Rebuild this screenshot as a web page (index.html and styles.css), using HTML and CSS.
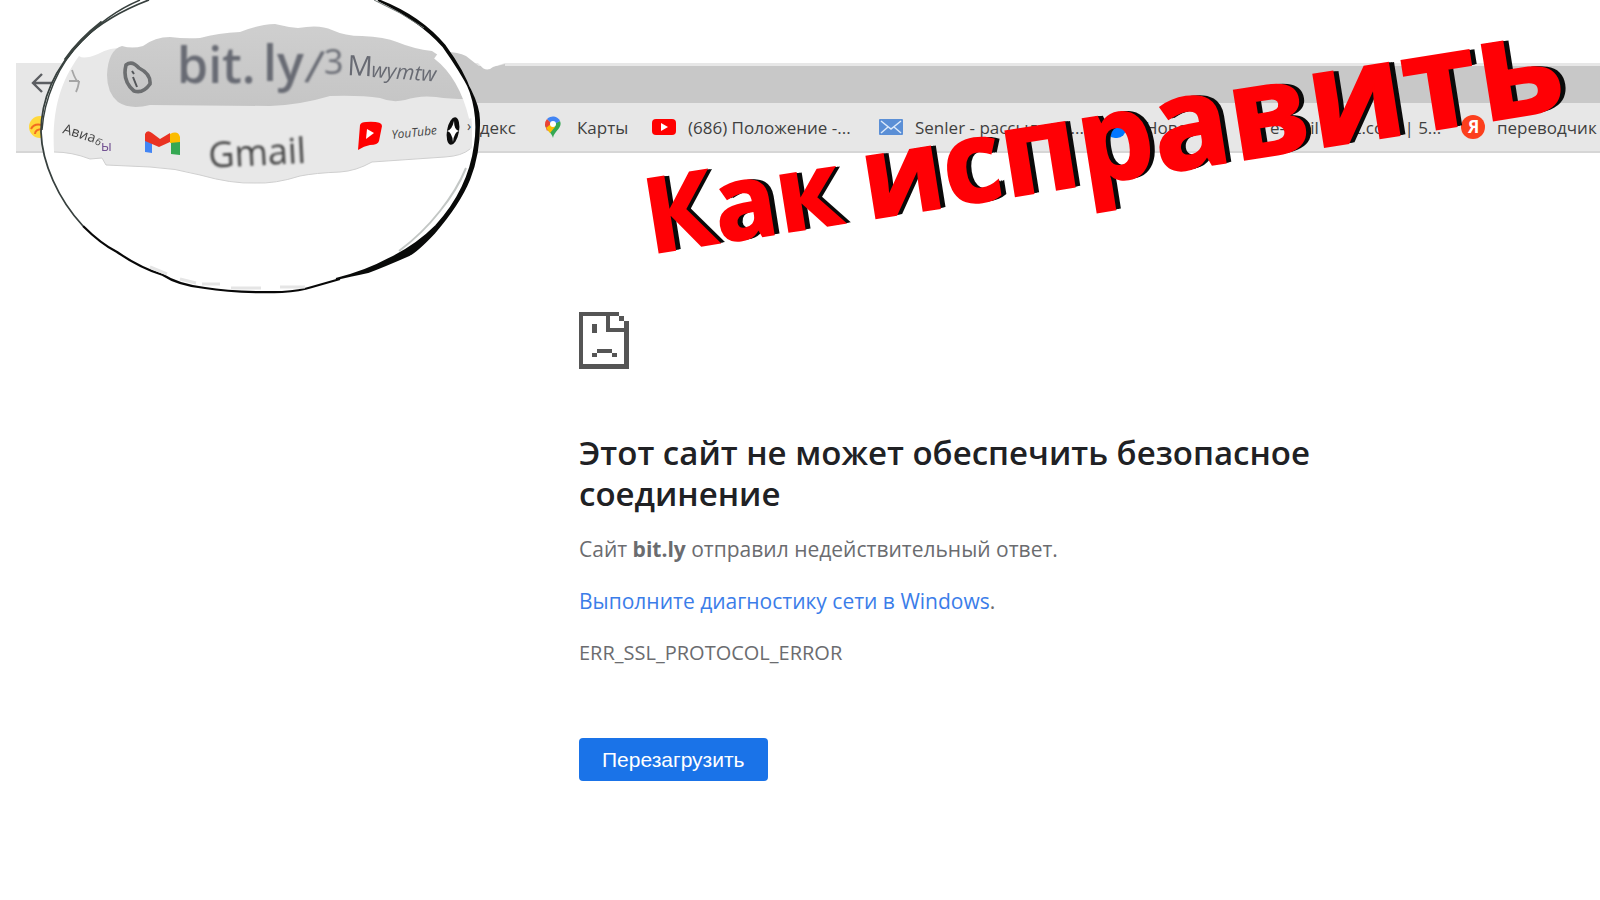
FILE: index.html
```html
<!DOCTYPE html>
<html lang="ru">
<head>
<meta charset="utf-8">
<title>bit.ly</title>
<link rel="stylesheet" href="styles.css">
</head>
<body>
<header class="browser">
  <div class="toolbar">
    <button class="back" type="button" aria-label="Назад">
      <svg width="24" height="20" viewBox="0 0 24 20"><path d="M24 10H2M11 1L2 10l9 9" fill="none" stroke="#5c5e62" stroke-width="2.4"/></svg>
    </button>
    <div class="address"></div>
  </div>
  <nav class="bookmarks">
    <a class="mark mark-first" href="#">
      <svg width="24" height="24" viewBox="0 0 24 24"><circle cx="12" cy="12" r="11" fill="#ffd83b"/><path d="M3 14Q6 8 14 10M7 19q0-5 8-5" fill="none" stroke="#f26b21" stroke-width="2"/></svg>
      <span>декс</span>
    </a>
    <a class="mark mark-short" href="#">
      <svg width="18" height="22" viewBox="0 0 18 22"><path d="M9 22C8 16 1 14 1 8h8l7-3c3 7-6 10-7 17z" fill="#34a853"/><path d="M1 9a8 8 0 0 1 2-6l6 5-6 7z" fill="#ea4335"/><path d="M3 3a8 8 0 0 1 13 2l-7 4z" fill="#4285f4"/><path d="M2 12l6-5 3 4-5 6z" fill="#fbbc04"/><circle cx="9" cy="8" r="3" fill="#fff"/></svg>
      <span>Карты</span>
    </a>
    <a class="mark mark-long" href="#">
      <svg width="24" height="16" viewBox="0 0 24 16"><rect width="24" height="16" rx="4" fill="#f00"/><path d="M9 4l7 4-7 4z" fill="#fff"/></svg>
      <span>(686) Положение -...</span>
    </a>
    <a class="mark mark-long" href="#">
      <svg width="24" height="16" viewBox="0 0 24 16"><rect width="24" height="16" rx="1" fill="#5b8fd6"/><path d="M2 2l10 8 10-8M2 14l7-6M22 14l-7-6" fill="none" stroke="#dce9fa" stroke-width="1.5"/></svg>
      <span>Senler - рассылки с...</span>
    </a>
    <a class="mark mark-short mark-news" href="#">
      <svg width="24" height="22" viewBox="0 0 24 22"><rect width="20" height="22" rx="9" fill="#07f"/></svg>
      <span>Новое</span>
    </a>
    <a class="mark mark-long" href="#">
      <svg width="24" height="16" viewBox="0 0 24 16"></svg>
      <span>e-mail mart.com | 5...</span>
    </a>
    <a class="mark" href="#">
      <svg width="24" height="24" viewBox="0 0 24 24"><circle cx="12" cy="12" r="12" fill="#fc3f1d"/><text class="ya" x="7" y="18">Я</text></svg>
      <span>переводчик</span>
    </a>
  </nav>
</header>

<svg class="lens" width="520" height="300" viewBox="0 0 520 300">
  <defs>
    <linearGradient id="bar" x1="0" y1="0" x2="0" y2="1"><stop offset="0" stop-color="#cfcfcf"/><stop offset="1" stop-color="#c5c5c5"/></linearGradient>
    <filter id="soft"><feGaussianBlur stdDeviation="1"/></filter>
    <filter id="faint"><feGaussianBlur stdDeviation=".5"/></filter>
  </defs>
  <path d="M446 52Q458 52 466 56L480 67Q486 73 493 67L505 64V102H446z" fill="#c8c8c8"/>
  <path d="M464 50L480 65Q486 73 493 67L505 63V50z" fill="#fff"/>
  <path d="M140 0C85 25 42 75 41 132C42 185 75 225 120 254C170 285 220 293 270 293C330 290 385 270 425 242C460 205 480 165 479 120C476 80 440 30 378 0z" fill="#fff"/>
  <g filter="url(#faint)">
    <path d="M54 152C52 115 58 85 79 56Q84 60 98 54Q112 46 135 48L450 68Q470 92 472 125V148Q462 156 445 157L372 162Q356 171 340 172Q315 173 300 176Q275 184 255 183Q232 184 200 175Q175 168 150 167L106 165L102 158L90 159Q72 152 54 152z" fill="#e8e8e8"/>
    <path d="M54 152Q72 152 90 159L102 158L106 165L150 167Q175 168 200 175Q232 184 255 183Q275 184 300 176Q315 173 340 172Q356 171 372 162L445 157Q462 156 470 149" fill="none" stroke="#cfcfcf"/>
    <path d="M107 75Q108 50 122 46Q132 49 143 46Q155 37 170 37Q185 39 200 38Q218 33 240 32Q260 24 275 24Q287 27 298 28Q320 24 332 30Q345 36 362 36Q385 37 397 42Q414 49 432 51Q457 66 467 99Q450 99 436 97Q420 95 405 100Q392 103 380 98Q360 95 330 96Q300 105 270 106L150 105Q130 110 118 102Q107 93 107 75z" fill="url(#bar)"/>
    <path d="M436 56Q462 76 472 118" fill="none" stroke="#fff" stroke-width="6"/>
  </g>
  <path d="M72 70Q76 82 79 82Q78 88 76 92M69 81l10 0" fill="none" stroke="#a5a5a5" stroke-width="1.8"/>
  <g fill="none" stroke="#6c6e70" filter="url(#faint)"><path d="M126 65Q132 60 139 68Q151 74 150 84Q143 94 134 91Q122 81 126 65z" stroke-width="3.6"/><path d="M132 71l2 3M133 77l4 10" stroke="#55575a" stroke-width="2"/></g>
  <g class="lens-url" filter="url(#soft)">
    <text x="177" y="83" font-size="50" font-weight="600">bit.</text>
    <text x="263" y="81" font-size="50" font-weight="600">ly</text>
    <text x="304" y="82" font-size="46" transform="rotate(8 304 82)">/</text>
    <text x="324" y="74" font-size="34">3</text>
  </g>
  <g class="lens-url" filter="url(#faint)">
    <text x="347" y="75" font-size="28" transform="rotate(3 347 75)">M</text>
    <text class="slant" x="371" y="77" font-size="21" transform="rotate(4 371 77)">wymtw</text>
  </g>
  <g class="lens-mark" filter="url(#faint)">
    <text x="62" y="133" font-size="14" transform="rotate(17 62 133)">Авиа</text>
    <text x="94" y="143" font-size="10" transform="rotate(35 94 143)">б</text>
    <text x="101" y="151" font-size="14" fill="#735293">ы</text>
  </g>
  <g filter="url(#faint)">
    <path d="M145 135l7 4v14l-7-1z" fill="#4285f4"/><path d="M171 140l9-3v18l-9-1z" fill="#34a853"/><path d="M145 134q2-5 7-1l8 6 10-6v9l-11 5-14-6z" fill="#ea3324"/><path d="M170 134q8-4 10 3v5l-10 1z" fill="#fbbc04"/>
    <path d="M360 125Q361 122 366 122Q382 121 382 126L379 141Q378 145 370 145Q364 146 358 150z" fill="#f00"/><path d="M367 129l7 4-8 6z" fill="#fff"/>
    <ellipse cx="453" cy="131" rx="6" ry="14" transform="rotate(10 453 131)" fill="#111"/><path d="M454 121q0 9 5 10q-5 1-6 11q-1-10-6-11q5-1 7-10z" fill="#fff"/>
  </g>
  <text class="lens-mark" x="209" y="168" font-size="36" transform="rotate(-3 209 168)" filter="url(#soft)">Gmail</text>
  <text class="lens-mark slant tight" x="392" y="139" font-size="12" transform="rotate(-6 392 139)">YouTube</text>
  <text class="lens-mark" x="467" y="131" font-size="14">›</text>
  <path d="M149 0C120 11 98 25 82 40C55 68 41 100 41 132C42 163 58 199 83 226" fill="none" stroke="#37403e" stroke-width="1.8"/>
  <path d="M140 0C116 10 96 26 82 41C58 64 44 100 42 130" fill="none" stroke="#37403e" stroke-width="1.4"/>
  <path d="M102 22Q79 40 65 60" fill="none" stroke="#39423f" stroke-width="3"/>
  <path d="M83 226Q101 244 117 252Q140 268 163 275Q178 285 205 288Q234 293 282 292Q300 291 312 287L340 279" fill="none" stroke="#080808" stroke-width="2.2"/>
  <path d="M150 267l17 7M180 279l16 4M202 284h18M231 288h30M280 287h25" stroke="#e5e5e5" stroke-width="3"/>
  <path d="M336 279Q365 272 389 259Q416 246 436 226Q469 190 475 145C481 105 467 76 445 46Q420 16 378 0Q420 20 443 46C467 80 479 103 479 120C480 165 467 195 434 233Q417 251 409 255Q384 266 368 272Q349 276 336 279z" fill="#090a09" stroke="#090a09" stroke-width="2"/>
  <path d="M399 251Q422 234 440 211Q457 190 466 168" fill="none" stroke="#c3c7c5" stroke-width="2"/>
  <path d="M374 0Q401 12 424 28" fill="none" stroke="#6d7472"/>
</svg>

<h1 class="banner"><span class="b1">Как</span> <span class="b2">ис</span><span class="b3">пр</span><span class="b4">ав</span><span class="b5">ит</span><span class="b6">ь</span></h1>

<main class="error">
  <svg class="sad" width="50" height="57" viewBox="0 0 50 57"><path d="M0 0h40v4H4v48h41V20H27V4h4v12h14V9h5v48H0zM40 4h5v5h-5zM13 12h5v9h-5zM18 37h15v4H18zM13 41h5v4h-5zM33 41h5v4h-5z" fill="#555"/></svg>
  <h2 class="title">Этот сайт не может обеспечить безопасное соединение</h2>
  <p class="line">Сайт <strong>bit.ly</strong> отправил недействительный ответ.</p>
  <p class="line"><a class="link" href="#">Выполните диагностику сети в Windows</a>.</p>
  <p class="line code">ERR_SSL_PROTOCOL_ERROR</p>
  <button class="reload" type="button">Перезагрузить</button>
</main>
</body>
</html>
```
FILE: styles.css
```css
* { box-sizing: border-box; }
body {
  margin: 0;
  background: #fff;
  color: #6b6c6f;
  font-family: "Open Sans", "Noto Sans", sans-serif;
  overflow-x: hidden;
}
.browser {
  margin: 63px 0 0 16px;
  background: #e7e7e7;
  border-bottom: 2px solid #d6d6d6;
}
.toolbar {
  display: flex;
  height: 40px;
  padding-top: 3px;
}
.back {
  width: 40px;
  padding: 0 0 0 14px;
  border: 0;
  background: none;
}
.address {
  flex: 1;
  margin-left: 400px;
  background: #c8c8c8;
}
.bookmarks {
  display: flex;
  height: 48px;
  padding-left: 12px;
  overflow: hidden;
}
.mark {
  display: flex;
  flex: none;
  align-items: center;
  gap: 12px;
  color: #3f3f3f;
  font-size: 17px;
  text-decoration: none;
  white-space: nowrap;
}
.mark-first {
  width: 516px;
  padding-right: 28px;
  justify-content: space-between;
}
.mark-short { width: 108px; gap: 15px; }
.mark-long { width: 227px; }
.mark-news { width: 128px; }
.ya {
  fill: #fff;
  font: bold 17px "Open Sans", sans-serif;
}
.lens {
  position: absolute;
  left: 0;
  top: 0;
}
.lens-url { fill: #686b73; font-family: "Open Sans", sans-serif; }
.lens-mark { fill: #444; font-family: "Open Sans", sans-serif; }
.slant { font-style: italic; }
.tight { font-family: "Liberation Sans Narrow", "Open Sans", sans-serif; }
.banner {
  position: absolute;
  left: 648px;
  top: 120px;
  margin: 0;
  color: #ff0005;
  font-size: 88px;
  font-weight: 700;
  line-height: 160px;
  white-space: nowrap;
  -webkit-text-stroke: 2px #ff0005;
  text-shadow: 2px 0 #0a0a0a, 4px 0 #0a0a0a, 6px 0 #0a0a0a;
  transform: rotate(-9deg);
  transform-origin: 0 120px;
}
.b1 { font-size: 104px; }
.b2 { font-size: 114px; }
.b3 { font-size: 120px; }
.b4 { font-size: 128px; }
.b5 { font-size: 134px; }
.b6 { font-size: 140px; }
.error {
  max-width: 1340px;
  margin-top: 159px;
  padding: 0 0 60px 579px;
}
.sad { display: block; }
.title {
  margin: 63px 0 20px;
  color: #202124;
  font-size: 33px;
  font-weight: 600;
  line-height: 41px;
}
.line {
  margin: 0 0 22px;
  font-size: 21px;
  line-height: 30px;
}
.code { font-size: 20px; }
.link { color: #3b7de9; text-decoration: none; }
.reload {
  display: block;
  height: 43px;
  margin-top: 70px;
  padding: 0 23px;
  border: 0;
  border-radius: 4px;
  background: #1a73e8;
  color: #fff;
  font: 21px "Liberation Sans", sans-serif;
}
```
